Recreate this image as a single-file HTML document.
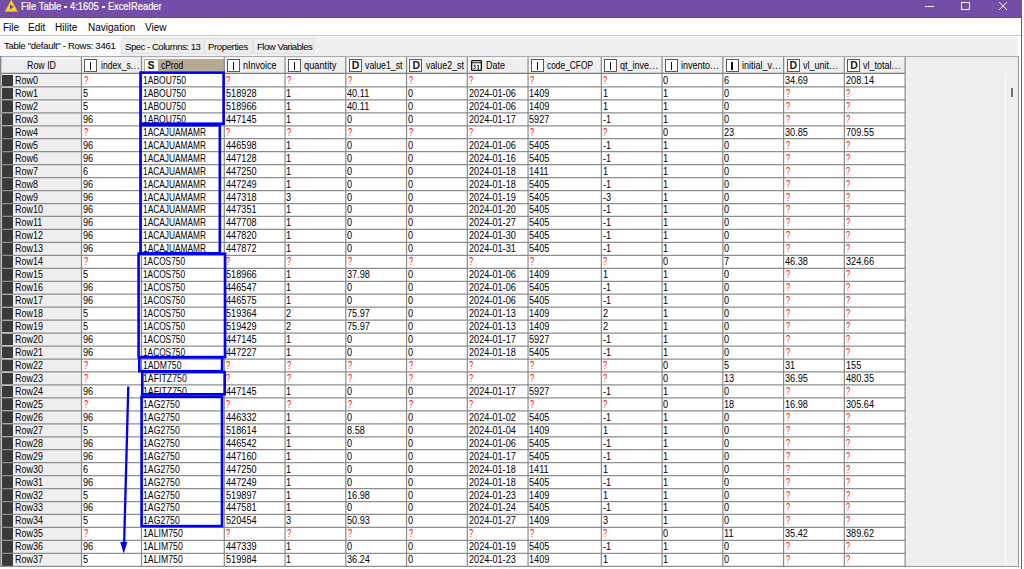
<!DOCTYPE html><html><head><meta charset="utf-8"><style>
*{margin:0;padding:0;box-sizing:border-box}
html,body{width:1024px;height:569px;overflow:hidden;background:#fff;font-family:"Liberation Sans",sans-serif;position:relative}
.a{position:absolute}
.t{position:absolute;white-space:nowrap;line-height:1}
.menu{font-size:10px;color:#000;top:23px}
.tab{font-size:9.5px;letter-spacing:-0.25px;color:#000}
.c{position:absolute;font-size:9.8px;color:#000;white-space:nowrap;line-height:1;transform-origin:0 0}
.q{color:#f00}
.ib{position:absolute;top:59px;width:13px;height:13px;border:1px solid #5a5a5a;background:#fff}
.ht{position:absolute;top:61px;font-size:9.5px;white-space:nowrap;line-height:1;color:#000;transform-origin:0 0}
</style></head><body>

<div class="a" style="left:0;top:0;width:1022px;height:18px;background:#744DA9"></div>
<div class="a" style="left:0;top:17px;width:1022px;height:1px;background:#6a44a0"></div>
<div class="a" style="left:1021px;top:0;width:1px;height:569px;background:#744DA9"></div>
<svg class="a" style="left:4px;top:0" width="15" height="13" viewBox="0 0 15 13"><polygon points="7.3,0 13.6,11.6 1,11.6" fill="#F7D900"/><polygon points="7.3,0 13.6,11.6 1,11.6" fill="none" stroke="#E9A800" stroke-width="0.5"/><polygon points="6,4.6 9.6,7 6,9.4" fill="#4F45C8"/></svg>
<div class="t" style="left:21.4px;top:2px;font-size:10px;color:#fff;-webkit-text-stroke:0.2px #fff;transform:scaleX(0.944);transform-origin:0 0">File Table</div>
<div class="t" style="left:107.6px;top:2px;font-size:10px;color:#fff;-webkit-text-stroke:0.2px #fff;transform:scaleX(0.918);transform-origin:0 0">Excel</div>
<div class="t" style="left:131.3px;top:2px;font-size:10px;color:#fff;-webkit-text-stroke:0.2px #fff;transform:scaleX(0.935);transform-origin:0 0">Reader</div>
<div class="t" style="left:70px;top:2px;font-size:10px;color:#fff;-webkit-text-stroke:0.2px #fff;transform:scaleX(0.937);transform-origin:0 0">4:1605</div>
<div class="a" style="left:63.8px;top:6.3px;width:3px;height:1.3px;background:#fff"></div>
<div class="a" style="left:101.9px;top:6.3px;width:2.8px;height:1.3px;background:#fff"></div>
<div class="a" style="left:925px;top:6px;width:9px;height:1px;background:#fff"></div>
<div class="a" style="left:961px;top:2px;width:9px;height:8px;border:1px solid #fff"></div>
<svg class="a" style="left:998px;top:1px" width="10" height="10" viewBox="0 0 10 10"><path d="M1 1L9 9M9 1L1 9" stroke="#fff" stroke-width="1"/></svg>
<div class="t menu" style="left:3px">File</div>
<div class="t menu" style="left:28px">Edit</div>
<div class="t menu" style="left:55px">Hilite</div>
<div class="t menu" style="left:88px">Navigation</div>
<div class="t menu" style="left:145px">View</div>
<div class="a" style="left:0;top:35px;width:1021px;height:1px;background:#C8C8C8"></div>
<div class="a" style="left:0;top:36px;width:1018px;height:21px;background:#F0F0F0"></div>
<div class="a" style="left:0;top:36px;width:1018px;height:1px;background:#FAFAFA"></div>
<div class="a" style="left:0;top:37px;width:121px;height:19px;background:#F9F9F9"></div>
<div class="a" style="left:121px;top:38px;width:83px;height:16px;background:#EEEEEE;border:1px solid #E2E2E2"></div>
<div class="a" style="left:204px;top:38px;width:49px;height:16px;background:#EEEEEE;border:1px solid #E2E2E2"></div>
<div class="a" style="left:253px;top:38px;width:61px;height:16px;background:#EEEEEE;border:1px solid #E2E2E2"></div>
<div class="t tab" style="left:4px;top:41px;letter-spacing:-0.28px">Table "default" - Rows: 3461</div>
<div class="t tab" style="left:125px;top:42px;letter-spacing:-0.45px">Spec - Columns: 13</div>
<div class="t tab" style="left:208px;top:42px;letter-spacing:-0.35px">Properties</div>
<div class="t tab" style="left:257px;top:42px;letter-spacing:-0.45px">Flow Variables</div>
<div class="a" style="left:0;top:56px;width:1019px;height:511px;background:#EFEFEF;border:1px solid #9a9a9a;border-top-color:#A9ADB2"></div>
<div class="a" style="left:1005px;top:74px;width:1px;height:492px;background:#fbfbfb"></div>
<div class="a" style="left:1011px;top:88px;width:2px;height:9px;background:#707070"></div>
<div class="a" style="left:1px;top:57px;width:905.1px;height:17px;background:#EEEEEE"></div>
<div class="a" style="left:1px;top:57.5px;width:905.1px;height:1px;background:#fafafa"></div>
<div class="ht" style="left:27px;top:61.3px;transform:scale(0.93,1.06)">Row ID</div>
<div class="a" style="left:82.5px;top:57px;width:1px;height:16px;background:#fbfbfb"></div>
<div class="ib" style="left:84.4px"></div>
<div class="a" style="left:90.10px;top:61.5px;width:1.3px;height:8px;background:#111"></div>
<div class="ht" style="left:100.5px;transform:scale(0.909,1.06)">index_s<span style="letter-spacing:0.75px">...</span></div>
<div class="a" style="left:144.0px;top:59px;width:79.80000000000001px;height:12px;background:#B6AB92"></div>
<div class="a" style="left:145.0px;top:59.5px;width:13px;height:11px;background:#fff"></div>
<div class="t" style="left:147.8px;top:60.6px;font-size:10px;font-weight:bold;color:#1a1a1a;-webkit-text-stroke:0.2px #1a1a1a">S</div>
<div class="ht" style="left:160.5px;transform:scale(0.890,1.06)">cProd</div>
<div class="a" style="left:225.3px;top:57px;width:1px;height:16px;background:#fbfbfb"></div>
<div class="ib" style="left:227.20000000000002px"></div>
<div class="a" style="left:232.90px;top:61.5px;width:1.3px;height:8px;background:#111"></div>
<div class="ht" style="left:243.3px;transform:scale(0.947,1.06)">nInvoice</div>
<div class="a" style="left:286.05px;top:57px;width:1px;height:16px;background:#fbfbfb"></div>
<div class="ib" style="left:287.95px"></div>
<div class="a" style="left:293.65px;top:61.5px;width:1.3px;height:8px;background:#111"></div>
<div class="ht" style="left:304.05px;transform:scale(0.975,1.06)">quantity</div>
<div class="a" style="left:346.8px;top:57px;width:1px;height:16px;background:#fbfbfb"></div>
<div class="ib" style="left:348.7px"></div>
<div class="t" style="left:351.7px;top:60.3px;font-size:10.5px;font-weight:bold;color:#1a1a1a;-webkit-text-stroke:0.05px #1a1a1a">D</div>
<div class="ht" style="left:364.8px;transform:scale(0.923,1.06)">value1_st</div>
<div class="a" style="left:407.55px;top:57px;width:1px;height:16px;background:#fbfbfb"></div>
<div class="ib" style="left:409.45px"></div>
<div class="t" style="left:412.45px;top:60.3px;font-size:10.5px;font-weight:bold;color:#1a1a1a;-webkit-text-stroke:0.05px #1a1a1a">D</div>
<div class="ht" style="left:425.55px;transform:scale(0.933,1.06)">value2_st</div>
<div class="a" style="left:468.3px;top:57px;width:1px;height:16px;background:#fbfbfb"></div>
<svg class="a" style="left:471.0px;top:60px" width="12" height="11" viewBox="0 0 12 11"><rect x="0.65" y="0.6" width="9.7" height="9.8" rx="0.8" fill="#fff" stroke="#111" stroke-width="1.3"/><line x1="0.65" y1="2.75" x2="10.35" y2="2.75" stroke="#111" stroke-width="1.0"/><path d="M2.6 5.2h1.6l-0.9 1.2q1.1 0 1.1 1.1t-1.1 1.2h-0.8M6.2 5.6l1.1-0.5v4.1M6.4 9.2h1.6" fill="none" stroke="#111" stroke-width="0.95"/></svg>
<div class="ht" style="left:486.3px;transform:scale(0.947,1.06)">Date</div>
<div class="a" style="left:529.05px;top:57px;width:1px;height:16px;background:#fbfbfb"></div>
<div class="ib" style="left:530.9499999999999px"></div>
<div class="a" style="left:536.65px;top:61.5px;width:1.3px;height:8px;background:#111"></div>
<div class="ht" style="left:547.05px;transform:scale(0.881,1.06)">code_CFOP</div>
<div class="a" style="left:602.35px;top:57px;width:1px;height:16px;background:#fbfbfb"></div>
<div class="ib" style="left:604.25px"></div>
<div class="a" style="left:609.95px;top:61.5px;width:1.3px;height:8px;background:#111"></div>
<div class="ht" style="left:620.35px;transform:scale(0.947,1.06)">qt_inve<span style="letter-spacing:0.75px">...</span></div>
<div class="a" style="left:663.1px;top:57px;width:1px;height:16px;background:#fbfbfb"></div>
<div class="ib" style="left:665.0px"></div>
<div class="a" style="left:670.70px;top:61.5px;width:1.3px;height:8px;background:#111"></div>
<div class="ht" style="left:681.1px;transform:scale(0.947,1.06)">invento<span style="letter-spacing:0.75px">...</span></div>
<div class="a" style="left:723.85px;top:57px;width:1px;height:16px;background:#fbfbfb"></div>
<div class="ib" style="left:725.75px"></div>
<div class="a" style="left:731.45px;top:61.5px;width:1.3px;height:8px;background:#111"></div>
<div class="ht" style="left:741.85px;transform:scale(0.947,1.06)">initial_v<span style="letter-spacing:0.75px">...</span></div>
<div class="a" style="left:784.6px;top:57px;width:1px;height:16px;background:#fbfbfb"></div>
<div class="ib" style="left:786.5px"></div>
<div class="t" style="left:789.5px;top:60.3px;font-size:10.5px;font-weight:bold;color:#1a1a1a;-webkit-text-stroke:0.05px #1a1a1a">D</div>
<div class="ht" style="left:802.6px;transform:scale(0.947,1.06)">vl_unit<span style="letter-spacing:0.75px">...</span></div>
<div class="a" style="left:845.35px;top:57px;width:1px;height:16px;background:#fbfbfb"></div>
<div class="ib" style="left:847.25px"></div>
<div class="t" style="left:850.25px;top:60.3px;font-size:10.5px;font-weight:bold;color:#1a1a1a;-webkit-text-stroke:0.05px #1a1a1a">D</div>
<div class="ht" style="left:863.35px;transform:scale(0.947,1.06)">vl_total<span style="letter-spacing:0.75px">...</span></div>
<div class="a" style="left:81.5px;top:73.95px;width:823.6px;height:492.36600000000004px;background:#fff"></div>
<div class="a" style="left:1.5px;top:73.95px;width:80px;height:492.36600000000004px;background:#EFEFEF"></div>
<div class="a" style="left:2px;top:74.55px;width:10.8px;height:11.76px;background:#3a3a3a"></div>
<div class="c" style="left:14.9px;top:74.90px;transform:scale(0.915,1.08)">Row0</div>
<div class="c q" style="left:83.60px;top:74.90px;transform:scale(0.75,1.08);">?</div>
<div class="c" style="left:143.30px;top:74.90px;transform:scale(0.869,1.08);">1ABOU750</div>
<div class="c q" style="left:226.40px;top:74.90px;transform:scale(0.75,1.08);">?</div>
<div class="c q" style="left:287.15px;top:74.90px;transform:scale(0.75,1.08);">?</div>
<div class="c q" style="left:347.90px;top:74.90px;transform:scale(0.75,1.08);">?</div>
<div class="c q" style="left:408.65px;top:74.90px;transform:scale(0.75,1.08);">?</div>
<div class="c q" style="left:469.40px;top:74.90px;transform:scale(0.75,1.08);">?</div>
<div class="c q" style="left:530.15px;top:74.90px;transform:scale(0.75,1.08);">?</div>
<div class="c q" style="left:603.45px;top:74.90px;transform:scale(0.75,1.08);">?</div>
<div class="c" style="left:663.30px;top:74.90px;transform:scale(0.935,1.08);">0</div>
<div class="c" style="left:724.05px;top:74.90px;transform:scale(0.935,1.08);">6</div>
<div class="c" style="left:784.80px;top:74.90px;transform:scale(0.935,1.08);">34.69</div>
<div class="c" style="left:845.55px;top:74.90px;transform:scale(0.935,1.08);">208.14</div>
<div class="a" style="left:2px;top:87.51px;width:10.8px;height:11.76px;background:#3a3a3a"></div>
<div class="c" style="left:14.9px;top:87.86px;transform:scale(0.915,1.08)">Row1</div>
<div class="c" style="left:82.70px;top:87.86px;transform:scale(0.935,1.08);">5</div>
<div class="c" style="left:143.30px;top:87.86px;transform:scale(0.869,1.08);">1ABOU750</div>
<div class="c" style="left:225.50px;top:87.86px;transform:scale(0.935,1.08);">518928</div>
<div class="c" style="left:286.25px;top:87.86px;transform:scale(0.935,1.08);">1</div>
<div class="c" style="left:347.00px;top:87.86px;transform:scale(0.935,1.08);">40.11</div>
<div class="c" style="left:407.75px;top:87.86px;transform:scale(0.935,1.08);">0</div>
<div class="c" style="left:468.50px;top:87.86px;transform:scale(0.935,1.08);">2024-01-06</div>
<div class="c" style="left:529.25px;top:87.86px;transform:scale(0.935,1.08);">1409</div>
<div class="c" style="left:602.55px;top:87.86px;transform:scale(0.935,1.08);">1</div>
<div class="c" style="left:663.30px;top:87.86px;transform:scale(0.935,1.08);">1</div>
<div class="c" style="left:724.05px;top:87.86px;transform:scale(0.935,1.08);">0</div>
<div class="c q" style="left:785.70px;top:87.86px;transform:scale(0.75,1.08);">?</div>
<div class="c q" style="left:846.45px;top:87.86px;transform:scale(0.75,1.08);">?</div>
<div class="a" style="left:2px;top:100.46px;width:10.8px;height:11.76px;background:#3a3a3a"></div>
<div class="c" style="left:14.9px;top:100.81px;transform:scale(0.915,1.08)">Row2</div>
<div class="c" style="left:82.70px;top:100.81px;transform:scale(0.935,1.08);">5</div>
<div class="c" style="left:143.30px;top:100.81px;transform:scale(0.869,1.08);">1ABOU750</div>
<div class="c" style="left:225.50px;top:100.81px;transform:scale(0.935,1.08);">518966</div>
<div class="c" style="left:286.25px;top:100.81px;transform:scale(0.935,1.08);">1</div>
<div class="c" style="left:347.00px;top:100.81px;transform:scale(0.935,1.08);">40.11</div>
<div class="c" style="left:407.75px;top:100.81px;transform:scale(0.935,1.08);">0</div>
<div class="c" style="left:468.50px;top:100.81px;transform:scale(0.935,1.08);">2024-01-06</div>
<div class="c" style="left:529.25px;top:100.81px;transform:scale(0.935,1.08);">1409</div>
<div class="c" style="left:602.55px;top:100.81px;transform:scale(0.935,1.08);">1</div>
<div class="c" style="left:663.30px;top:100.81px;transform:scale(0.935,1.08);">1</div>
<div class="c" style="left:724.05px;top:100.81px;transform:scale(0.935,1.08);">0</div>
<div class="c q" style="left:785.70px;top:100.81px;transform:scale(0.75,1.08);">?</div>
<div class="c q" style="left:846.45px;top:100.81px;transform:scale(0.75,1.08);">?</div>
<div class="a" style="left:2px;top:113.42px;width:10.8px;height:11.76px;background:#3a3a3a"></div>
<div class="c" style="left:14.9px;top:113.77px;transform:scale(0.915,1.08)">Row3</div>
<div class="c" style="left:82.70px;top:113.77px;transform:scale(0.935,1.08);">96</div>
<div class="c" style="left:143.30px;top:113.77px;transform:scale(0.869,1.08);">1ABOU750</div>
<div class="c" style="left:225.50px;top:113.77px;transform:scale(0.935,1.08);">447145</div>
<div class="c" style="left:286.25px;top:113.77px;transform:scale(0.935,1.08);">1</div>
<div class="c" style="left:347.00px;top:113.77px;transform:scale(0.935,1.08);">0</div>
<div class="c" style="left:407.75px;top:113.77px;transform:scale(0.935,1.08);">0</div>
<div class="c" style="left:468.50px;top:113.77px;transform:scale(0.935,1.08);">2024-01-17</div>
<div class="c" style="left:529.25px;top:113.77px;transform:scale(0.935,1.08);">5927</div>
<div class="c" style="left:602.55px;top:113.77px;transform:scale(0.935,1.08);">-1</div>
<div class="c" style="left:663.30px;top:113.77px;transform:scale(0.935,1.08);">1</div>
<div class="c" style="left:724.05px;top:113.77px;transform:scale(0.935,1.08);">0</div>
<div class="c q" style="left:785.70px;top:113.77px;transform:scale(0.75,1.08);">?</div>
<div class="c q" style="left:846.45px;top:113.77px;transform:scale(0.75,1.08);">?</div>
<div class="a" style="left:2px;top:126.38px;width:10.8px;height:11.76px;background:#3a3a3a"></div>
<div class="c" style="left:14.9px;top:126.73px;transform:scale(0.915,1.08)">Row4</div>
<div class="c q" style="left:83.60px;top:126.73px;transform:scale(0.75,1.08);">?</div>
<div class="c" style="left:143.30px;top:126.73px;transform:scale(0.852,1.08);">1ACAJUAMAMR</div>
<div class="c q" style="left:226.40px;top:126.73px;transform:scale(0.75,1.08);">?</div>
<div class="c q" style="left:287.15px;top:126.73px;transform:scale(0.75,1.08);">?</div>
<div class="c q" style="left:347.90px;top:126.73px;transform:scale(0.75,1.08);">?</div>
<div class="c q" style="left:408.65px;top:126.73px;transform:scale(0.75,1.08);">?</div>
<div class="c q" style="left:469.40px;top:126.73px;transform:scale(0.75,1.08);">?</div>
<div class="c q" style="left:530.15px;top:126.73px;transform:scale(0.75,1.08);">?</div>
<div class="c q" style="left:603.45px;top:126.73px;transform:scale(0.75,1.08);">?</div>
<div class="c" style="left:663.30px;top:126.73px;transform:scale(0.935,1.08);">0</div>
<div class="c" style="left:724.05px;top:126.73px;transform:scale(0.935,1.08);">23</div>
<div class="c" style="left:784.80px;top:126.73px;transform:scale(0.935,1.08);">30.85</div>
<div class="c" style="left:845.55px;top:126.73px;transform:scale(0.935,1.08);">709.55</div>
<div class="a" style="left:2px;top:139.34px;width:10.8px;height:11.76px;background:#3a3a3a"></div>
<div class="c" style="left:14.9px;top:139.69px;transform:scale(0.915,1.08)">Row5</div>
<div class="c" style="left:82.70px;top:139.69px;transform:scale(0.935,1.08);">96</div>
<div class="c" style="left:143.30px;top:139.69px;transform:scale(0.852,1.08);">1ACAJUAMAMR</div>
<div class="c" style="left:225.50px;top:139.69px;transform:scale(0.935,1.08);">446598</div>
<div class="c" style="left:286.25px;top:139.69px;transform:scale(0.935,1.08);">1</div>
<div class="c" style="left:347.00px;top:139.69px;transform:scale(0.935,1.08);">0</div>
<div class="c" style="left:407.75px;top:139.69px;transform:scale(0.935,1.08);">0</div>
<div class="c" style="left:468.50px;top:139.69px;transform:scale(0.935,1.08);">2024-01-06</div>
<div class="c" style="left:529.25px;top:139.69px;transform:scale(0.935,1.08);">5405</div>
<div class="c" style="left:602.55px;top:139.69px;transform:scale(0.935,1.08);">-1</div>
<div class="c" style="left:663.30px;top:139.69px;transform:scale(0.935,1.08);">1</div>
<div class="c" style="left:724.05px;top:139.69px;transform:scale(0.935,1.08);">0</div>
<div class="c q" style="left:785.70px;top:139.69px;transform:scale(0.75,1.08);">?</div>
<div class="c q" style="left:846.45px;top:139.69px;transform:scale(0.75,1.08);">?</div>
<div class="a" style="left:2px;top:152.29px;width:10.8px;height:11.76px;background:#3a3a3a"></div>
<div class="c" style="left:14.9px;top:152.64px;transform:scale(0.915,1.08)">Row6</div>
<div class="c" style="left:82.70px;top:152.64px;transform:scale(0.935,1.08);">96</div>
<div class="c" style="left:143.30px;top:152.64px;transform:scale(0.852,1.08);">1ACAJUAMAMR</div>
<div class="c" style="left:225.50px;top:152.64px;transform:scale(0.935,1.08);">447128</div>
<div class="c" style="left:286.25px;top:152.64px;transform:scale(0.935,1.08);">1</div>
<div class="c" style="left:347.00px;top:152.64px;transform:scale(0.935,1.08);">0</div>
<div class="c" style="left:407.75px;top:152.64px;transform:scale(0.935,1.08);">0</div>
<div class="c" style="left:468.50px;top:152.64px;transform:scale(0.935,1.08);">2024-01-16</div>
<div class="c" style="left:529.25px;top:152.64px;transform:scale(0.935,1.08);">5405</div>
<div class="c" style="left:602.55px;top:152.64px;transform:scale(0.935,1.08);">-1</div>
<div class="c" style="left:663.30px;top:152.64px;transform:scale(0.935,1.08);">1</div>
<div class="c" style="left:724.05px;top:152.64px;transform:scale(0.935,1.08);">0</div>
<div class="c q" style="left:785.70px;top:152.64px;transform:scale(0.75,1.08);">?</div>
<div class="c q" style="left:846.45px;top:152.64px;transform:scale(0.75,1.08);">?</div>
<div class="a" style="left:2px;top:165.25px;width:10.8px;height:11.76px;background:#3a3a3a"></div>
<div class="c" style="left:14.9px;top:165.60px;transform:scale(0.915,1.08)">Row7</div>
<div class="c" style="left:82.70px;top:165.60px;transform:scale(0.935,1.08);">6</div>
<div class="c" style="left:143.30px;top:165.60px;transform:scale(0.852,1.08);">1ACAJUAMAMR</div>
<div class="c" style="left:225.50px;top:165.60px;transform:scale(0.935,1.08);">447250</div>
<div class="c" style="left:286.25px;top:165.60px;transform:scale(0.935,1.08);">1</div>
<div class="c" style="left:347.00px;top:165.60px;transform:scale(0.935,1.08);">0</div>
<div class="c" style="left:407.75px;top:165.60px;transform:scale(0.935,1.08);">0</div>
<div class="c" style="left:468.50px;top:165.60px;transform:scale(0.935,1.08);">2024-01-18</div>
<div class="c" style="left:529.25px;top:165.60px;transform:scale(0.935,1.08);">1411</div>
<div class="c" style="left:602.55px;top:165.60px;transform:scale(0.935,1.08);">1</div>
<div class="c" style="left:663.30px;top:165.60px;transform:scale(0.935,1.08);">1</div>
<div class="c" style="left:724.05px;top:165.60px;transform:scale(0.935,1.08);">0</div>
<div class="c q" style="left:785.70px;top:165.60px;transform:scale(0.75,1.08);">?</div>
<div class="c q" style="left:846.45px;top:165.60px;transform:scale(0.75,1.08);">?</div>
<div class="a" style="left:2px;top:178.21px;width:10.8px;height:11.76px;background:#3a3a3a"></div>
<div class="c" style="left:14.9px;top:178.56px;transform:scale(0.915,1.08)">Row8</div>
<div class="c" style="left:82.70px;top:178.56px;transform:scale(0.935,1.08);">96</div>
<div class="c" style="left:143.30px;top:178.56px;transform:scale(0.852,1.08);">1ACAJUAMAMR</div>
<div class="c" style="left:225.50px;top:178.56px;transform:scale(0.935,1.08);">447249</div>
<div class="c" style="left:286.25px;top:178.56px;transform:scale(0.935,1.08);">1</div>
<div class="c" style="left:347.00px;top:178.56px;transform:scale(0.935,1.08);">0</div>
<div class="c" style="left:407.75px;top:178.56px;transform:scale(0.935,1.08);">0</div>
<div class="c" style="left:468.50px;top:178.56px;transform:scale(0.935,1.08);">2024-01-18</div>
<div class="c" style="left:529.25px;top:178.56px;transform:scale(0.935,1.08);">5405</div>
<div class="c" style="left:602.55px;top:178.56px;transform:scale(0.935,1.08);">-1</div>
<div class="c" style="left:663.30px;top:178.56px;transform:scale(0.935,1.08);">1</div>
<div class="c" style="left:724.05px;top:178.56px;transform:scale(0.935,1.08);">0</div>
<div class="c q" style="left:785.70px;top:178.56px;transform:scale(0.75,1.08);">?</div>
<div class="c q" style="left:846.45px;top:178.56px;transform:scale(0.75,1.08);">?</div>
<div class="a" style="left:2px;top:191.16px;width:10.8px;height:11.76px;background:#3a3a3a"></div>
<div class="c" style="left:14.9px;top:191.51px;transform:scale(0.915,1.08)">Row9</div>
<div class="c" style="left:82.70px;top:191.51px;transform:scale(0.935,1.08);">96</div>
<div class="c" style="left:143.30px;top:191.51px;transform:scale(0.852,1.08);">1ACAJUAMAMR</div>
<div class="c" style="left:225.50px;top:191.51px;transform:scale(0.935,1.08);">447318</div>
<div class="c" style="left:286.25px;top:191.51px;transform:scale(0.935,1.08);">3</div>
<div class="c" style="left:347.00px;top:191.51px;transform:scale(0.935,1.08);">0</div>
<div class="c" style="left:407.75px;top:191.51px;transform:scale(0.935,1.08);">0</div>
<div class="c" style="left:468.50px;top:191.51px;transform:scale(0.935,1.08);">2024-01-19</div>
<div class="c" style="left:529.25px;top:191.51px;transform:scale(0.935,1.08);">5405</div>
<div class="c" style="left:602.55px;top:191.51px;transform:scale(0.935,1.08);">-3</div>
<div class="c" style="left:663.30px;top:191.51px;transform:scale(0.935,1.08);">1</div>
<div class="c" style="left:724.05px;top:191.51px;transform:scale(0.935,1.08);">0</div>
<div class="c q" style="left:785.70px;top:191.51px;transform:scale(0.75,1.08);">?</div>
<div class="c q" style="left:846.45px;top:191.51px;transform:scale(0.75,1.08);">?</div>
<div class="a" style="left:2px;top:204.12px;width:10.8px;height:11.76px;background:#3a3a3a"></div>
<div class="c" style="left:14.9px;top:204.47px;transform:scale(0.915,1.08)">Row10</div>
<div class="c" style="left:82.70px;top:204.47px;transform:scale(0.935,1.08);">96</div>
<div class="c" style="left:143.30px;top:204.47px;transform:scale(0.852,1.08);">1ACAJUAMAMR</div>
<div class="c" style="left:225.50px;top:204.47px;transform:scale(0.935,1.08);">447351</div>
<div class="c" style="left:286.25px;top:204.47px;transform:scale(0.935,1.08);">1</div>
<div class="c" style="left:347.00px;top:204.47px;transform:scale(0.935,1.08);">0</div>
<div class="c" style="left:407.75px;top:204.47px;transform:scale(0.935,1.08);">0</div>
<div class="c" style="left:468.50px;top:204.47px;transform:scale(0.935,1.08);">2024-01-20</div>
<div class="c" style="left:529.25px;top:204.47px;transform:scale(0.935,1.08);">5405</div>
<div class="c" style="left:602.55px;top:204.47px;transform:scale(0.935,1.08);">-1</div>
<div class="c" style="left:663.30px;top:204.47px;transform:scale(0.935,1.08);">1</div>
<div class="c" style="left:724.05px;top:204.47px;transform:scale(0.935,1.08);">0</div>
<div class="c q" style="left:785.70px;top:204.47px;transform:scale(0.75,1.08);">?</div>
<div class="c q" style="left:846.45px;top:204.47px;transform:scale(0.75,1.08);">?</div>
<div class="a" style="left:2px;top:217.08px;width:10.8px;height:11.76px;background:#3a3a3a"></div>
<div class="c" style="left:14.9px;top:217.43px;transform:scale(0.915,1.08)">Row11</div>
<div class="c" style="left:82.70px;top:217.43px;transform:scale(0.935,1.08);">96</div>
<div class="c" style="left:143.30px;top:217.43px;transform:scale(0.852,1.08);">1ACAJUAMAMR</div>
<div class="c" style="left:225.50px;top:217.43px;transform:scale(0.935,1.08);">447708</div>
<div class="c" style="left:286.25px;top:217.43px;transform:scale(0.935,1.08);">1</div>
<div class="c" style="left:347.00px;top:217.43px;transform:scale(0.935,1.08);">0</div>
<div class="c" style="left:407.75px;top:217.43px;transform:scale(0.935,1.08);">0</div>
<div class="c" style="left:468.50px;top:217.43px;transform:scale(0.935,1.08);">2024-01-27</div>
<div class="c" style="left:529.25px;top:217.43px;transform:scale(0.935,1.08);">5405</div>
<div class="c" style="left:602.55px;top:217.43px;transform:scale(0.935,1.08);">-1</div>
<div class="c" style="left:663.30px;top:217.43px;transform:scale(0.935,1.08);">1</div>
<div class="c" style="left:724.05px;top:217.43px;transform:scale(0.935,1.08);">0</div>
<div class="c q" style="left:785.70px;top:217.43px;transform:scale(0.75,1.08);">?</div>
<div class="c q" style="left:846.45px;top:217.43px;transform:scale(0.75,1.08);">?</div>
<div class="a" style="left:2px;top:230.03px;width:10.8px;height:11.76px;background:#3a3a3a"></div>
<div class="c" style="left:14.9px;top:230.38px;transform:scale(0.915,1.08)">Row12</div>
<div class="c" style="left:82.70px;top:230.38px;transform:scale(0.935,1.08);">96</div>
<div class="c" style="left:143.30px;top:230.38px;transform:scale(0.852,1.08);">1ACAJUAMAMR</div>
<div class="c" style="left:225.50px;top:230.38px;transform:scale(0.935,1.08);">447820</div>
<div class="c" style="left:286.25px;top:230.38px;transform:scale(0.935,1.08);">1</div>
<div class="c" style="left:347.00px;top:230.38px;transform:scale(0.935,1.08);">0</div>
<div class="c" style="left:407.75px;top:230.38px;transform:scale(0.935,1.08);">0</div>
<div class="c" style="left:468.50px;top:230.38px;transform:scale(0.935,1.08);">2024-01-30</div>
<div class="c" style="left:529.25px;top:230.38px;transform:scale(0.935,1.08);">5405</div>
<div class="c" style="left:602.55px;top:230.38px;transform:scale(0.935,1.08);">-1</div>
<div class="c" style="left:663.30px;top:230.38px;transform:scale(0.935,1.08);">1</div>
<div class="c" style="left:724.05px;top:230.38px;transform:scale(0.935,1.08);">0</div>
<div class="c q" style="left:785.70px;top:230.38px;transform:scale(0.75,1.08);">?</div>
<div class="c q" style="left:846.45px;top:230.38px;transform:scale(0.75,1.08);">?</div>
<div class="a" style="left:2px;top:242.99px;width:10.8px;height:11.76px;background:#3a3a3a"></div>
<div class="c" style="left:14.9px;top:243.34px;transform:scale(0.915,1.08)">Row13</div>
<div class="c" style="left:82.70px;top:243.34px;transform:scale(0.935,1.08);">96</div>
<div class="c" style="left:143.30px;top:243.34px;transform:scale(0.852,1.08);">1ACAJUAMAMR</div>
<div class="c" style="left:225.50px;top:243.34px;transform:scale(0.935,1.08);">447872</div>
<div class="c" style="left:286.25px;top:243.34px;transform:scale(0.935,1.08);">1</div>
<div class="c" style="left:347.00px;top:243.34px;transform:scale(0.935,1.08);">0</div>
<div class="c" style="left:407.75px;top:243.34px;transform:scale(0.935,1.08);">0</div>
<div class="c" style="left:468.50px;top:243.34px;transform:scale(0.935,1.08);">2024-01-31</div>
<div class="c" style="left:529.25px;top:243.34px;transform:scale(0.935,1.08);">5405</div>
<div class="c" style="left:602.55px;top:243.34px;transform:scale(0.935,1.08);">-1</div>
<div class="c" style="left:663.30px;top:243.34px;transform:scale(0.935,1.08);">1</div>
<div class="c" style="left:724.05px;top:243.34px;transform:scale(0.935,1.08);">0</div>
<div class="c q" style="left:785.70px;top:243.34px;transform:scale(0.75,1.08);">?</div>
<div class="c q" style="left:846.45px;top:243.34px;transform:scale(0.75,1.08);">?</div>
<div class="a" style="left:2px;top:255.95px;width:10.8px;height:11.76px;background:#3a3a3a"></div>
<div class="c" style="left:14.9px;top:256.30px;transform:scale(0.915,1.08)">Row14</div>
<div class="c q" style="left:83.60px;top:256.30px;transform:scale(0.75,1.08);">?</div>
<div class="c" style="left:143.30px;top:256.30px;transform:scale(0.848,1.08);">1ACOS750</div>
<div class="c q" style="left:226.40px;top:256.30px;transform:scale(0.75,1.08);">?</div>
<div class="c q" style="left:287.15px;top:256.30px;transform:scale(0.75,1.08);">?</div>
<div class="c q" style="left:347.90px;top:256.30px;transform:scale(0.75,1.08);">?</div>
<div class="c q" style="left:408.65px;top:256.30px;transform:scale(0.75,1.08);">?</div>
<div class="c q" style="left:469.40px;top:256.30px;transform:scale(0.75,1.08);">?</div>
<div class="c q" style="left:530.15px;top:256.30px;transform:scale(0.75,1.08);">?</div>
<div class="c q" style="left:603.45px;top:256.30px;transform:scale(0.75,1.08);">?</div>
<div class="c" style="left:663.30px;top:256.30px;transform:scale(0.935,1.08);">0</div>
<div class="c" style="left:724.05px;top:256.30px;transform:scale(0.935,1.08);">7</div>
<div class="c" style="left:784.80px;top:256.30px;transform:scale(0.935,1.08);">46.38</div>
<div class="c" style="left:845.55px;top:256.30px;transform:scale(0.935,1.08);">324.66</div>
<div class="a" style="left:2px;top:268.91px;width:10.8px;height:11.76px;background:#3a3a3a"></div>
<div class="c" style="left:14.9px;top:269.25px;transform:scale(0.915,1.08)">Row15</div>
<div class="c" style="left:82.70px;top:269.25px;transform:scale(0.935,1.08);">5</div>
<div class="c" style="left:143.30px;top:269.25px;transform:scale(0.848,1.08);">1ACOS750</div>
<div class="c" style="left:225.50px;top:269.25px;transform:scale(0.935,1.08);">518966</div>
<div class="c" style="left:286.25px;top:269.25px;transform:scale(0.935,1.08);">1</div>
<div class="c" style="left:347.00px;top:269.25px;transform:scale(0.935,1.08);">37.98</div>
<div class="c" style="left:407.75px;top:269.25px;transform:scale(0.935,1.08);">0</div>
<div class="c" style="left:468.50px;top:269.25px;transform:scale(0.935,1.08);">2024-01-06</div>
<div class="c" style="left:529.25px;top:269.25px;transform:scale(0.935,1.08);">1409</div>
<div class="c" style="left:602.55px;top:269.25px;transform:scale(0.935,1.08);">1</div>
<div class="c" style="left:663.30px;top:269.25px;transform:scale(0.935,1.08);">1</div>
<div class="c" style="left:724.05px;top:269.25px;transform:scale(0.935,1.08);">0</div>
<div class="c q" style="left:785.70px;top:269.25px;transform:scale(0.75,1.08);">?</div>
<div class="c q" style="left:846.45px;top:269.25px;transform:scale(0.75,1.08);">?</div>
<div class="a" style="left:2px;top:281.86px;width:10.8px;height:11.76px;background:#3a3a3a"></div>
<div class="c" style="left:14.9px;top:282.21px;transform:scale(0.915,1.08)">Row16</div>
<div class="c" style="left:82.70px;top:282.21px;transform:scale(0.935,1.08);">96</div>
<div class="c" style="left:143.30px;top:282.21px;transform:scale(0.848,1.08);">1ACOS750</div>
<div class="c" style="left:225.50px;top:282.21px;transform:scale(0.935,1.08);">446547</div>
<div class="c" style="left:286.25px;top:282.21px;transform:scale(0.935,1.08);">1</div>
<div class="c" style="left:347.00px;top:282.21px;transform:scale(0.935,1.08);">0</div>
<div class="c" style="left:407.75px;top:282.21px;transform:scale(0.935,1.08);">0</div>
<div class="c" style="left:468.50px;top:282.21px;transform:scale(0.935,1.08);">2024-01-06</div>
<div class="c" style="left:529.25px;top:282.21px;transform:scale(0.935,1.08);">5405</div>
<div class="c" style="left:602.55px;top:282.21px;transform:scale(0.935,1.08);">-1</div>
<div class="c" style="left:663.30px;top:282.21px;transform:scale(0.935,1.08);">1</div>
<div class="c" style="left:724.05px;top:282.21px;transform:scale(0.935,1.08);">0</div>
<div class="c q" style="left:785.70px;top:282.21px;transform:scale(0.75,1.08);">?</div>
<div class="c q" style="left:846.45px;top:282.21px;transform:scale(0.75,1.08);">?</div>
<div class="a" style="left:2px;top:294.82px;width:10.8px;height:11.76px;background:#3a3a3a"></div>
<div class="c" style="left:14.9px;top:295.17px;transform:scale(0.915,1.08)">Row17</div>
<div class="c" style="left:82.70px;top:295.17px;transform:scale(0.935,1.08);">96</div>
<div class="c" style="left:143.30px;top:295.17px;transform:scale(0.848,1.08);">1ACOS750</div>
<div class="c" style="left:225.50px;top:295.17px;transform:scale(0.935,1.08);">446575</div>
<div class="c" style="left:286.25px;top:295.17px;transform:scale(0.935,1.08);">1</div>
<div class="c" style="left:347.00px;top:295.17px;transform:scale(0.935,1.08);">0</div>
<div class="c" style="left:407.75px;top:295.17px;transform:scale(0.935,1.08);">0</div>
<div class="c" style="left:468.50px;top:295.17px;transform:scale(0.935,1.08);">2024-01-06</div>
<div class="c" style="left:529.25px;top:295.17px;transform:scale(0.935,1.08);">5405</div>
<div class="c" style="left:602.55px;top:295.17px;transform:scale(0.935,1.08);">-1</div>
<div class="c" style="left:663.30px;top:295.17px;transform:scale(0.935,1.08);">1</div>
<div class="c" style="left:724.05px;top:295.17px;transform:scale(0.935,1.08);">0</div>
<div class="c q" style="left:785.70px;top:295.17px;transform:scale(0.75,1.08);">?</div>
<div class="c q" style="left:846.45px;top:295.17px;transform:scale(0.75,1.08);">?</div>
<div class="a" style="left:2px;top:307.78px;width:10.8px;height:11.76px;background:#3a3a3a"></div>
<div class="c" style="left:14.9px;top:308.13px;transform:scale(0.915,1.08)">Row18</div>
<div class="c" style="left:82.70px;top:308.13px;transform:scale(0.935,1.08);">5</div>
<div class="c" style="left:143.30px;top:308.13px;transform:scale(0.848,1.08);">1ACOS750</div>
<div class="c" style="left:225.50px;top:308.13px;transform:scale(0.935,1.08);">519364</div>
<div class="c" style="left:286.25px;top:308.13px;transform:scale(0.935,1.08);">2</div>
<div class="c" style="left:347.00px;top:308.13px;transform:scale(0.935,1.08);">75.97</div>
<div class="c" style="left:407.75px;top:308.13px;transform:scale(0.935,1.08);">0</div>
<div class="c" style="left:468.50px;top:308.13px;transform:scale(0.935,1.08);">2024-01-13</div>
<div class="c" style="left:529.25px;top:308.13px;transform:scale(0.935,1.08);">1409</div>
<div class="c" style="left:602.55px;top:308.13px;transform:scale(0.935,1.08);">2</div>
<div class="c" style="left:663.30px;top:308.13px;transform:scale(0.935,1.08);">1</div>
<div class="c" style="left:724.05px;top:308.13px;transform:scale(0.935,1.08);">0</div>
<div class="c q" style="left:785.70px;top:308.13px;transform:scale(0.75,1.08);">?</div>
<div class="c q" style="left:846.45px;top:308.13px;transform:scale(0.75,1.08);">?</div>
<div class="a" style="left:2px;top:320.73px;width:10.8px;height:11.76px;background:#3a3a3a"></div>
<div class="c" style="left:14.9px;top:321.08px;transform:scale(0.915,1.08)">Row19</div>
<div class="c" style="left:82.70px;top:321.08px;transform:scale(0.935,1.08);">5</div>
<div class="c" style="left:143.30px;top:321.08px;transform:scale(0.848,1.08);">1ACOS750</div>
<div class="c" style="left:225.50px;top:321.08px;transform:scale(0.935,1.08);">519429</div>
<div class="c" style="left:286.25px;top:321.08px;transform:scale(0.935,1.08);">2</div>
<div class="c" style="left:347.00px;top:321.08px;transform:scale(0.935,1.08);">75.97</div>
<div class="c" style="left:407.75px;top:321.08px;transform:scale(0.935,1.08);">0</div>
<div class="c" style="left:468.50px;top:321.08px;transform:scale(0.935,1.08);">2024-01-13</div>
<div class="c" style="left:529.25px;top:321.08px;transform:scale(0.935,1.08);">1409</div>
<div class="c" style="left:602.55px;top:321.08px;transform:scale(0.935,1.08);">2</div>
<div class="c" style="left:663.30px;top:321.08px;transform:scale(0.935,1.08);">1</div>
<div class="c" style="left:724.05px;top:321.08px;transform:scale(0.935,1.08);">0</div>
<div class="c q" style="left:785.70px;top:321.08px;transform:scale(0.75,1.08);">?</div>
<div class="c q" style="left:846.45px;top:321.08px;transform:scale(0.75,1.08);">?</div>
<div class="a" style="left:2px;top:333.69px;width:10.8px;height:11.76px;background:#3a3a3a"></div>
<div class="c" style="left:14.9px;top:334.04px;transform:scale(0.915,1.08)">Row20</div>
<div class="c" style="left:82.70px;top:334.04px;transform:scale(0.935,1.08);">96</div>
<div class="c" style="left:143.30px;top:334.04px;transform:scale(0.848,1.08);">1ACOS750</div>
<div class="c" style="left:225.50px;top:334.04px;transform:scale(0.935,1.08);">447145</div>
<div class="c" style="left:286.25px;top:334.04px;transform:scale(0.935,1.08);">1</div>
<div class="c" style="left:347.00px;top:334.04px;transform:scale(0.935,1.08);">0</div>
<div class="c" style="left:407.75px;top:334.04px;transform:scale(0.935,1.08);">0</div>
<div class="c" style="left:468.50px;top:334.04px;transform:scale(0.935,1.08);">2024-01-17</div>
<div class="c" style="left:529.25px;top:334.04px;transform:scale(0.935,1.08);">5927</div>
<div class="c" style="left:602.55px;top:334.04px;transform:scale(0.935,1.08);">-1</div>
<div class="c" style="left:663.30px;top:334.04px;transform:scale(0.935,1.08);">1</div>
<div class="c" style="left:724.05px;top:334.04px;transform:scale(0.935,1.08);">0</div>
<div class="c q" style="left:785.70px;top:334.04px;transform:scale(0.75,1.08);">?</div>
<div class="c q" style="left:846.45px;top:334.04px;transform:scale(0.75,1.08);">?</div>
<div class="a" style="left:2px;top:346.65px;width:10.8px;height:11.76px;background:#3a3a3a"></div>
<div class="c" style="left:14.9px;top:347.00px;transform:scale(0.915,1.08)">Row21</div>
<div class="c" style="left:82.70px;top:347.00px;transform:scale(0.935,1.08);">96</div>
<div class="c" style="left:143.30px;top:347.00px;transform:scale(0.848,1.08);">1ACOS750</div>
<div class="c" style="left:225.50px;top:347.00px;transform:scale(0.935,1.08);">447227</div>
<div class="c" style="left:286.25px;top:347.00px;transform:scale(0.935,1.08);">1</div>
<div class="c" style="left:347.00px;top:347.00px;transform:scale(0.935,1.08);">0</div>
<div class="c" style="left:407.75px;top:347.00px;transform:scale(0.935,1.08);">0</div>
<div class="c" style="left:468.50px;top:347.00px;transform:scale(0.935,1.08);">2024-01-18</div>
<div class="c" style="left:529.25px;top:347.00px;transform:scale(0.935,1.08);">5405</div>
<div class="c" style="left:602.55px;top:347.00px;transform:scale(0.935,1.08);">-1</div>
<div class="c" style="left:663.30px;top:347.00px;transform:scale(0.935,1.08);">1</div>
<div class="c" style="left:724.05px;top:347.00px;transform:scale(0.935,1.08);">0</div>
<div class="c q" style="left:785.70px;top:347.00px;transform:scale(0.75,1.08);">?</div>
<div class="c q" style="left:846.45px;top:347.00px;transform:scale(0.75,1.08);">?</div>
<div class="a" style="left:2px;top:359.60px;width:10.8px;height:11.76px;background:#3a3a3a"></div>
<div class="c" style="left:14.9px;top:359.95px;transform:scale(0.915,1.08)">Row22</div>
<div class="c q" style="left:83.60px;top:359.95px;transform:scale(0.75,1.08);">?</div>
<div class="c" style="left:143.30px;top:359.95px;transform:scale(0.883,1.08);">1ADM750</div>
<div class="c q" style="left:226.40px;top:359.95px;transform:scale(0.75,1.08);">?</div>
<div class="c q" style="left:287.15px;top:359.95px;transform:scale(0.75,1.08);">?</div>
<div class="c q" style="left:347.90px;top:359.95px;transform:scale(0.75,1.08);">?</div>
<div class="c q" style="left:408.65px;top:359.95px;transform:scale(0.75,1.08);">?</div>
<div class="c q" style="left:469.40px;top:359.95px;transform:scale(0.75,1.08);">?</div>
<div class="c q" style="left:530.15px;top:359.95px;transform:scale(0.75,1.08);">?</div>
<div class="c q" style="left:603.45px;top:359.95px;transform:scale(0.75,1.08);">?</div>
<div class="c" style="left:663.30px;top:359.95px;transform:scale(0.935,1.08);">0</div>
<div class="c" style="left:724.05px;top:359.95px;transform:scale(0.935,1.08);">5</div>
<div class="c" style="left:784.80px;top:359.95px;transform:scale(0.935,1.08);">31</div>
<div class="c" style="left:845.55px;top:359.95px;transform:scale(0.935,1.08);">155</div>
<div class="a" style="left:2px;top:372.56px;width:10.8px;height:11.76px;background:#3a3a3a"></div>
<div class="c" style="left:14.9px;top:372.91px;transform:scale(0.915,1.08)">Row23</div>
<div class="c q" style="left:83.60px;top:372.91px;transform:scale(0.75,1.08);">?</div>
<div class="c" style="left:143.30px;top:372.91px;transform:scale(0.894,1.08);">1AFITZ750</div>
<div class="c q" style="left:226.40px;top:372.91px;transform:scale(0.75,1.08);">?</div>
<div class="c q" style="left:287.15px;top:372.91px;transform:scale(0.75,1.08);">?</div>
<div class="c q" style="left:347.90px;top:372.91px;transform:scale(0.75,1.08);">?</div>
<div class="c q" style="left:408.65px;top:372.91px;transform:scale(0.75,1.08);">?</div>
<div class="c q" style="left:469.40px;top:372.91px;transform:scale(0.75,1.08);">?</div>
<div class="c q" style="left:530.15px;top:372.91px;transform:scale(0.75,1.08);">?</div>
<div class="c q" style="left:603.45px;top:372.91px;transform:scale(0.75,1.08);">?</div>
<div class="c" style="left:663.30px;top:372.91px;transform:scale(0.935,1.08);">0</div>
<div class="c" style="left:724.05px;top:372.91px;transform:scale(0.935,1.08);">13</div>
<div class="c" style="left:784.80px;top:372.91px;transform:scale(0.935,1.08);">36.95</div>
<div class="c" style="left:845.55px;top:372.91px;transform:scale(0.935,1.08);">480.35</div>
<div class="a" style="left:2px;top:385.52px;width:10.8px;height:11.76px;background:#3a3a3a"></div>
<div class="c" style="left:14.9px;top:385.87px;transform:scale(0.915,1.08)">Row24</div>
<div class="c" style="left:82.70px;top:385.87px;transform:scale(0.935,1.08);">96</div>
<div class="c" style="left:143.30px;top:385.87px;transform:scale(0.894,1.08);">1AFITZ750</div>
<div class="c" style="left:225.50px;top:385.87px;transform:scale(0.935,1.08);">447145</div>
<div class="c" style="left:286.25px;top:385.87px;transform:scale(0.935,1.08);">1</div>
<div class="c" style="left:347.00px;top:385.87px;transform:scale(0.935,1.08);">0</div>
<div class="c" style="left:407.75px;top:385.87px;transform:scale(0.935,1.08);">0</div>
<div class="c" style="left:468.50px;top:385.87px;transform:scale(0.935,1.08);">2024-01-17</div>
<div class="c" style="left:529.25px;top:385.87px;transform:scale(0.935,1.08);">5927</div>
<div class="c" style="left:602.55px;top:385.87px;transform:scale(0.935,1.08);">-1</div>
<div class="c" style="left:663.30px;top:385.87px;transform:scale(0.935,1.08);">1</div>
<div class="c" style="left:724.05px;top:385.87px;transform:scale(0.935,1.08);">0</div>
<div class="c q" style="left:785.70px;top:385.87px;transform:scale(0.75,1.08);">?</div>
<div class="c q" style="left:846.45px;top:385.87px;transform:scale(0.75,1.08);">?</div>
<div class="a" style="left:2px;top:398.48px;width:10.8px;height:11.76px;background:#3a3a3a"></div>
<div class="c" style="left:14.9px;top:398.82px;transform:scale(0.915,1.08)">Row25</div>
<div class="c q" style="left:83.60px;top:398.82px;transform:scale(0.75,1.08);">?</div>
<div class="c" style="left:143.30px;top:398.82px;transform:scale(0.887,1.08);">1AG2750</div>
<div class="c q" style="left:226.40px;top:398.82px;transform:scale(0.75,1.08);">?</div>
<div class="c q" style="left:287.15px;top:398.82px;transform:scale(0.75,1.08);">?</div>
<div class="c q" style="left:347.90px;top:398.82px;transform:scale(0.75,1.08);">?</div>
<div class="c q" style="left:408.65px;top:398.82px;transform:scale(0.75,1.08);">?</div>
<div class="c q" style="left:469.40px;top:398.82px;transform:scale(0.75,1.08);">?</div>
<div class="c q" style="left:530.15px;top:398.82px;transform:scale(0.75,1.08);">?</div>
<div class="c q" style="left:603.45px;top:398.82px;transform:scale(0.75,1.08);">?</div>
<div class="c" style="left:663.30px;top:398.82px;transform:scale(0.935,1.08);">0</div>
<div class="c" style="left:724.05px;top:398.82px;transform:scale(0.935,1.08);">18</div>
<div class="c" style="left:784.80px;top:398.82px;transform:scale(0.935,1.08);">16.98</div>
<div class="c" style="left:845.55px;top:398.82px;transform:scale(0.935,1.08);">305.64</div>
<div class="a" style="left:2px;top:411.43px;width:10.8px;height:11.76px;background:#3a3a3a"></div>
<div class="c" style="left:14.9px;top:411.78px;transform:scale(0.915,1.08)">Row26</div>
<div class="c" style="left:82.70px;top:411.78px;transform:scale(0.935,1.08);">96</div>
<div class="c" style="left:143.30px;top:411.78px;transform:scale(0.887,1.08);">1AG2750</div>
<div class="c" style="left:225.50px;top:411.78px;transform:scale(0.935,1.08);">446332</div>
<div class="c" style="left:286.25px;top:411.78px;transform:scale(0.935,1.08);">1</div>
<div class="c" style="left:347.00px;top:411.78px;transform:scale(0.935,1.08);">0</div>
<div class="c" style="left:407.75px;top:411.78px;transform:scale(0.935,1.08);">0</div>
<div class="c" style="left:468.50px;top:411.78px;transform:scale(0.935,1.08);">2024-01-02</div>
<div class="c" style="left:529.25px;top:411.78px;transform:scale(0.935,1.08);">5405</div>
<div class="c" style="left:602.55px;top:411.78px;transform:scale(0.935,1.08);">-1</div>
<div class="c" style="left:663.30px;top:411.78px;transform:scale(0.935,1.08);">1</div>
<div class="c" style="left:724.05px;top:411.78px;transform:scale(0.935,1.08);">0</div>
<div class="c q" style="left:785.70px;top:411.78px;transform:scale(0.75,1.08);">?</div>
<div class="c q" style="left:846.45px;top:411.78px;transform:scale(0.75,1.08);">?</div>
<div class="a" style="left:2px;top:424.39px;width:10.8px;height:11.76px;background:#3a3a3a"></div>
<div class="c" style="left:14.9px;top:424.74px;transform:scale(0.915,1.08)">Row27</div>
<div class="c" style="left:82.70px;top:424.74px;transform:scale(0.935,1.08);">5</div>
<div class="c" style="left:143.30px;top:424.74px;transform:scale(0.887,1.08);">1AG2750</div>
<div class="c" style="left:225.50px;top:424.74px;transform:scale(0.935,1.08);">518614</div>
<div class="c" style="left:286.25px;top:424.74px;transform:scale(0.935,1.08);">1</div>
<div class="c" style="left:347.00px;top:424.74px;transform:scale(0.935,1.08);">8.58</div>
<div class="c" style="left:407.75px;top:424.74px;transform:scale(0.935,1.08);">0</div>
<div class="c" style="left:468.50px;top:424.74px;transform:scale(0.935,1.08);">2024-01-04</div>
<div class="c" style="left:529.25px;top:424.74px;transform:scale(0.935,1.08);">1409</div>
<div class="c" style="left:602.55px;top:424.74px;transform:scale(0.935,1.08);">1</div>
<div class="c" style="left:663.30px;top:424.74px;transform:scale(0.935,1.08);">1</div>
<div class="c" style="left:724.05px;top:424.74px;transform:scale(0.935,1.08);">0</div>
<div class="c q" style="left:785.70px;top:424.74px;transform:scale(0.75,1.08);">?</div>
<div class="c q" style="left:846.45px;top:424.74px;transform:scale(0.75,1.08);">?</div>
<div class="a" style="left:2px;top:437.35px;width:10.8px;height:11.76px;background:#3a3a3a"></div>
<div class="c" style="left:14.9px;top:437.70px;transform:scale(0.915,1.08)">Row28</div>
<div class="c" style="left:82.70px;top:437.70px;transform:scale(0.935,1.08);">96</div>
<div class="c" style="left:143.30px;top:437.70px;transform:scale(0.887,1.08);">1AG2750</div>
<div class="c" style="left:225.50px;top:437.70px;transform:scale(0.935,1.08);">446542</div>
<div class="c" style="left:286.25px;top:437.70px;transform:scale(0.935,1.08);">1</div>
<div class="c" style="left:347.00px;top:437.70px;transform:scale(0.935,1.08);">0</div>
<div class="c" style="left:407.75px;top:437.70px;transform:scale(0.935,1.08);">0</div>
<div class="c" style="left:468.50px;top:437.70px;transform:scale(0.935,1.08);">2024-01-06</div>
<div class="c" style="left:529.25px;top:437.70px;transform:scale(0.935,1.08);">5405</div>
<div class="c" style="left:602.55px;top:437.70px;transform:scale(0.935,1.08);">-1</div>
<div class="c" style="left:663.30px;top:437.70px;transform:scale(0.935,1.08);">1</div>
<div class="c" style="left:724.05px;top:437.70px;transform:scale(0.935,1.08);">0</div>
<div class="c q" style="left:785.70px;top:437.70px;transform:scale(0.75,1.08);">?</div>
<div class="c q" style="left:846.45px;top:437.70px;transform:scale(0.75,1.08);">?</div>
<div class="a" style="left:2px;top:450.30px;width:10.8px;height:11.76px;background:#3a3a3a"></div>
<div class="c" style="left:14.9px;top:450.65px;transform:scale(0.915,1.08)">Row29</div>
<div class="c" style="left:82.70px;top:450.65px;transform:scale(0.935,1.08);">96</div>
<div class="c" style="left:143.30px;top:450.65px;transform:scale(0.887,1.08);">1AG2750</div>
<div class="c" style="left:225.50px;top:450.65px;transform:scale(0.935,1.08);">447160</div>
<div class="c" style="left:286.25px;top:450.65px;transform:scale(0.935,1.08);">1</div>
<div class="c" style="left:347.00px;top:450.65px;transform:scale(0.935,1.08);">0</div>
<div class="c" style="left:407.75px;top:450.65px;transform:scale(0.935,1.08);">0</div>
<div class="c" style="left:468.50px;top:450.65px;transform:scale(0.935,1.08);">2024-01-17</div>
<div class="c" style="left:529.25px;top:450.65px;transform:scale(0.935,1.08);">5405</div>
<div class="c" style="left:602.55px;top:450.65px;transform:scale(0.935,1.08);">-1</div>
<div class="c" style="left:663.30px;top:450.65px;transform:scale(0.935,1.08);">1</div>
<div class="c" style="left:724.05px;top:450.65px;transform:scale(0.935,1.08);">0</div>
<div class="c q" style="left:785.70px;top:450.65px;transform:scale(0.75,1.08);">?</div>
<div class="c q" style="left:846.45px;top:450.65px;transform:scale(0.75,1.08);">?</div>
<div class="a" style="left:2px;top:463.26px;width:10.8px;height:11.76px;background:#3a3a3a"></div>
<div class="c" style="left:14.9px;top:463.61px;transform:scale(0.915,1.08)">Row30</div>
<div class="c" style="left:82.70px;top:463.61px;transform:scale(0.935,1.08);">6</div>
<div class="c" style="left:143.30px;top:463.61px;transform:scale(0.887,1.08);">1AG2750</div>
<div class="c" style="left:225.50px;top:463.61px;transform:scale(0.935,1.08);">447250</div>
<div class="c" style="left:286.25px;top:463.61px;transform:scale(0.935,1.08);">1</div>
<div class="c" style="left:347.00px;top:463.61px;transform:scale(0.935,1.08);">0</div>
<div class="c" style="left:407.75px;top:463.61px;transform:scale(0.935,1.08);">0</div>
<div class="c" style="left:468.50px;top:463.61px;transform:scale(0.935,1.08);">2024-01-18</div>
<div class="c" style="left:529.25px;top:463.61px;transform:scale(0.935,1.08);">1411</div>
<div class="c" style="left:602.55px;top:463.61px;transform:scale(0.935,1.08);">1</div>
<div class="c" style="left:663.30px;top:463.61px;transform:scale(0.935,1.08);">1</div>
<div class="c" style="left:724.05px;top:463.61px;transform:scale(0.935,1.08);">0</div>
<div class="c q" style="left:785.70px;top:463.61px;transform:scale(0.75,1.08);">?</div>
<div class="c q" style="left:846.45px;top:463.61px;transform:scale(0.75,1.08);">?</div>
<div class="a" style="left:2px;top:476.22px;width:10.8px;height:11.76px;background:#3a3a3a"></div>
<div class="c" style="left:14.9px;top:476.57px;transform:scale(0.915,1.08)">Row31</div>
<div class="c" style="left:82.70px;top:476.57px;transform:scale(0.935,1.08);">96</div>
<div class="c" style="left:143.30px;top:476.57px;transform:scale(0.887,1.08);">1AG2750</div>
<div class="c" style="left:225.50px;top:476.57px;transform:scale(0.935,1.08);">447249</div>
<div class="c" style="left:286.25px;top:476.57px;transform:scale(0.935,1.08);">1</div>
<div class="c" style="left:347.00px;top:476.57px;transform:scale(0.935,1.08);">0</div>
<div class="c" style="left:407.75px;top:476.57px;transform:scale(0.935,1.08);">0</div>
<div class="c" style="left:468.50px;top:476.57px;transform:scale(0.935,1.08);">2024-01-18</div>
<div class="c" style="left:529.25px;top:476.57px;transform:scale(0.935,1.08);">5405</div>
<div class="c" style="left:602.55px;top:476.57px;transform:scale(0.935,1.08);">-1</div>
<div class="c" style="left:663.30px;top:476.57px;transform:scale(0.935,1.08);">1</div>
<div class="c" style="left:724.05px;top:476.57px;transform:scale(0.935,1.08);">0</div>
<div class="c q" style="left:785.70px;top:476.57px;transform:scale(0.75,1.08);">?</div>
<div class="c q" style="left:846.45px;top:476.57px;transform:scale(0.75,1.08);">?</div>
<div class="a" style="left:2px;top:489.17px;width:10.8px;height:11.76px;background:#3a3a3a"></div>
<div class="c" style="left:14.9px;top:489.52px;transform:scale(0.915,1.08)">Row32</div>
<div class="c" style="left:82.70px;top:489.52px;transform:scale(0.935,1.08);">5</div>
<div class="c" style="left:143.30px;top:489.52px;transform:scale(0.887,1.08);">1AG2750</div>
<div class="c" style="left:225.50px;top:489.52px;transform:scale(0.935,1.08);">519897</div>
<div class="c" style="left:286.25px;top:489.52px;transform:scale(0.935,1.08);">1</div>
<div class="c" style="left:347.00px;top:489.52px;transform:scale(0.935,1.08);">16.98</div>
<div class="c" style="left:407.75px;top:489.52px;transform:scale(0.935,1.08);">0</div>
<div class="c" style="left:468.50px;top:489.52px;transform:scale(0.935,1.08);">2024-01-23</div>
<div class="c" style="left:529.25px;top:489.52px;transform:scale(0.935,1.08);">1409</div>
<div class="c" style="left:602.55px;top:489.52px;transform:scale(0.935,1.08);">1</div>
<div class="c" style="left:663.30px;top:489.52px;transform:scale(0.935,1.08);">1</div>
<div class="c" style="left:724.05px;top:489.52px;transform:scale(0.935,1.08);">0</div>
<div class="c q" style="left:785.70px;top:489.52px;transform:scale(0.75,1.08);">?</div>
<div class="c q" style="left:846.45px;top:489.52px;transform:scale(0.75,1.08);">?</div>
<div class="a" style="left:2px;top:502.13px;width:10.8px;height:11.76px;background:#3a3a3a"></div>
<div class="c" style="left:14.9px;top:502.48px;transform:scale(0.915,1.08)">Row33</div>
<div class="c" style="left:82.70px;top:502.48px;transform:scale(0.935,1.08);">96</div>
<div class="c" style="left:143.30px;top:502.48px;transform:scale(0.887,1.08);">1AG2750</div>
<div class="c" style="left:225.50px;top:502.48px;transform:scale(0.935,1.08);">447581</div>
<div class="c" style="left:286.25px;top:502.48px;transform:scale(0.935,1.08);">1</div>
<div class="c" style="left:347.00px;top:502.48px;transform:scale(0.935,1.08);">0</div>
<div class="c" style="left:407.75px;top:502.48px;transform:scale(0.935,1.08);">0</div>
<div class="c" style="left:468.50px;top:502.48px;transform:scale(0.935,1.08);">2024-01-24</div>
<div class="c" style="left:529.25px;top:502.48px;transform:scale(0.935,1.08);">5405</div>
<div class="c" style="left:602.55px;top:502.48px;transform:scale(0.935,1.08);">-1</div>
<div class="c" style="left:663.30px;top:502.48px;transform:scale(0.935,1.08);">1</div>
<div class="c" style="left:724.05px;top:502.48px;transform:scale(0.935,1.08);">0</div>
<div class="c q" style="left:785.70px;top:502.48px;transform:scale(0.75,1.08);">?</div>
<div class="c q" style="left:846.45px;top:502.48px;transform:scale(0.75,1.08);">?</div>
<div class="a" style="left:2px;top:515.09px;width:10.8px;height:11.76px;background:#3a3a3a"></div>
<div class="c" style="left:14.9px;top:515.44px;transform:scale(0.915,1.08)">Row34</div>
<div class="c" style="left:82.70px;top:515.44px;transform:scale(0.935,1.08);">5</div>
<div class="c" style="left:143.30px;top:515.44px;transform:scale(0.887,1.08);">1AG2750</div>
<div class="c" style="left:225.50px;top:515.44px;transform:scale(0.935,1.08);">520454</div>
<div class="c" style="left:286.25px;top:515.44px;transform:scale(0.935,1.08);">3</div>
<div class="c" style="left:347.00px;top:515.44px;transform:scale(0.935,1.08);">50.93</div>
<div class="c" style="left:407.75px;top:515.44px;transform:scale(0.935,1.08);">0</div>
<div class="c" style="left:468.50px;top:515.44px;transform:scale(0.935,1.08);">2024-01-27</div>
<div class="c" style="left:529.25px;top:515.44px;transform:scale(0.935,1.08);">1409</div>
<div class="c" style="left:602.55px;top:515.44px;transform:scale(0.935,1.08);">3</div>
<div class="c" style="left:663.30px;top:515.44px;transform:scale(0.935,1.08);">1</div>
<div class="c" style="left:724.05px;top:515.44px;transform:scale(0.935,1.08);">0</div>
<div class="c q" style="left:785.70px;top:515.44px;transform:scale(0.75,1.08);">?</div>
<div class="c q" style="left:846.45px;top:515.44px;transform:scale(0.75,1.08);">?</div>
<div class="a" style="left:2px;top:528.05px;width:10.8px;height:11.76px;background:#3a3a3a"></div>
<div class="c" style="left:14.9px;top:528.40px;transform:scale(0.915,1.08)">Row35</div>
<div class="c q" style="left:83.60px;top:528.40px;transform:scale(0.75,1.08);">?</div>
<div class="c" style="left:143.30px;top:528.40px;transform:scale(0.89,1.08);">1ALIM750</div>
<div class="c q" style="left:226.40px;top:528.40px;transform:scale(0.75,1.08);">?</div>
<div class="c q" style="left:287.15px;top:528.40px;transform:scale(0.75,1.08);">?</div>
<div class="c q" style="left:347.90px;top:528.40px;transform:scale(0.75,1.08);">?</div>
<div class="c q" style="left:408.65px;top:528.40px;transform:scale(0.75,1.08);">?</div>
<div class="c q" style="left:469.40px;top:528.40px;transform:scale(0.75,1.08);">?</div>
<div class="c q" style="left:530.15px;top:528.40px;transform:scale(0.75,1.08);">?</div>
<div class="c q" style="left:603.45px;top:528.40px;transform:scale(0.75,1.08);">?</div>
<div class="c" style="left:663.30px;top:528.40px;transform:scale(0.935,1.08);">0</div>
<div class="c" style="left:724.05px;top:528.40px;transform:scale(0.935,1.08);">11</div>
<div class="c" style="left:784.80px;top:528.40px;transform:scale(0.935,1.08);">35.42</div>
<div class="c" style="left:845.55px;top:528.40px;transform:scale(0.935,1.08);">389.62</div>
<div class="a" style="left:2px;top:541.00px;width:10.8px;height:11.76px;background:#3a3a3a"></div>
<div class="c" style="left:14.9px;top:541.35px;transform:scale(0.915,1.08)">Row36</div>
<div class="c" style="left:82.70px;top:541.35px;transform:scale(0.935,1.08);">96</div>
<div class="c" style="left:143.30px;top:541.35px;transform:scale(0.89,1.08);">1ALIM750</div>
<div class="c" style="left:225.50px;top:541.35px;transform:scale(0.935,1.08);">447339</div>
<div class="c" style="left:286.25px;top:541.35px;transform:scale(0.935,1.08);">1</div>
<div class="c" style="left:347.00px;top:541.35px;transform:scale(0.935,1.08);">0</div>
<div class="c" style="left:407.75px;top:541.35px;transform:scale(0.935,1.08);">0</div>
<div class="c" style="left:468.50px;top:541.35px;transform:scale(0.935,1.08);">2024-01-19</div>
<div class="c" style="left:529.25px;top:541.35px;transform:scale(0.935,1.08);">5405</div>
<div class="c" style="left:602.55px;top:541.35px;transform:scale(0.935,1.08);">-1</div>
<div class="c" style="left:663.30px;top:541.35px;transform:scale(0.935,1.08);">1</div>
<div class="c" style="left:724.05px;top:541.35px;transform:scale(0.935,1.08);">0</div>
<div class="c q" style="left:785.70px;top:541.35px;transform:scale(0.75,1.08);">?</div>
<div class="c q" style="left:846.45px;top:541.35px;transform:scale(0.75,1.08);">?</div>
<div class="a" style="left:2px;top:553.96px;width:10.8px;height:11.76px;background:#3a3a3a"></div>
<div class="c" style="left:14.9px;top:554.31px;transform:scale(0.915,1.08)">Row37</div>
<div class="c" style="left:82.70px;top:554.31px;transform:scale(0.935,1.08);">5</div>
<div class="c" style="left:143.30px;top:554.31px;transform:scale(0.89,1.08);">1ALIM750</div>
<div class="c" style="left:225.50px;top:554.31px;transform:scale(0.935,1.08);">519984</div>
<div class="c" style="left:286.25px;top:554.31px;transform:scale(0.935,1.08);">1</div>
<div class="c" style="left:347.00px;top:554.31px;transform:scale(0.935,1.08);">36.24</div>
<div class="c" style="left:407.75px;top:554.31px;transform:scale(0.935,1.08);">0</div>
<div class="c" style="left:468.50px;top:554.31px;transform:scale(0.935,1.08);">2024-01-23</div>
<div class="c" style="left:529.25px;top:554.31px;transform:scale(0.935,1.08);">1409</div>
<div class="c" style="left:602.55px;top:554.31px;transform:scale(0.935,1.08);">1</div>
<div class="c" style="left:663.30px;top:554.31px;transform:scale(0.935,1.08);">1</div>
<div class="c" style="left:724.05px;top:554.31px;transform:scale(0.935,1.08);">0</div>
<div class="c q" style="left:785.70px;top:554.31px;transform:scale(0.75,1.08);">?</div>
<div class="c q" style="left:846.45px;top:554.31px;transform:scale(0.75,1.08);">?</div>
<svg class="a" style="left:0;top:0" width="1024" height="569"><line x1="1" y1="73.4" x2="905.1" y2="73.4" stroke="#7c7c7c" stroke-width="1.3"/><line x1="1" y1="86.91" x2="905.7" y2="86.91" stroke="#8e8e8e" stroke-width="1.25"/><line x1="1" y1="99.86" x2="905.7" y2="99.86" stroke="#8e8e8e" stroke-width="1.25"/><line x1="1" y1="112.82" x2="905.7" y2="112.82" stroke="#8e8e8e" stroke-width="1.25"/><line x1="1" y1="125.78" x2="905.7" y2="125.78" stroke="#8e8e8e" stroke-width="1.25"/><line x1="1" y1="138.74" x2="905.7" y2="138.74" stroke="#8e8e8e" stroke-width="1.25"/><line x1="1" y1="151.69" x2="905.7" y2="151.69" stroke="#8e8e8e" stroke-width="1.25"/><line x1="1" y1="164.65" x2="905.7" y2="164.65" stroke="#8e8e8e" stroke-width="1.25"/><line x1="1" y1="177.61" x2="905.7" y2="177.61" stroke="#8e8e8e" stroke-width="1.25"/><line x1="1" y1="190.56" x2="905.7" y2="190.56" stroke="#8e8e8e" stroke-width="1.25"/><line x1="1" y1="203.52" x2="905.7" y2="203.52" stroke="#8e8e8e" stroke-width="1.25"/><line x1="1" y1="216.48" x2="905.7" y2="216.48" stroke="#8e8e8e" stroke-width="1.25"/><line x1="1" y1="229.43" x2="905.7" y2="229.43" stroke="#8e8e8e" stroke-width="1.25"/><line x1="1" y1="242.39" x2="905.7" y2="242.39" stroke="#8e8e8e" stroke-width="1.25"/><line x1="1" y1="255.35" x2="905.7" y2="255.35" stroke="#8e8e8e" stroke-width="1.25"/><line x1="1" y1="268.31" x2="905.7" y2="268.31" stroke="#8e8e8e" stroke-width="1.25"/><line x1="1" y1="281.26" x2="905.7" y2="281.26" stroke="#8e8e8e" stroke-width="1.25"/><line x1="1" y1="294.22" x2="905.7" y2="294.22" stroke="#8e8e8e" stroke-width="1.25"/><line x1="1" y1="307.18" x2="905.7" y2="307.18" stroke="#8e8e8e" stroke-width="1.25"/><line x1="1" y1="320.13" x2="905.7" y2="320.13" stroke="#8e8e8e" stroke-width="1.25"/><line x1="1" y1="333.09" x2="905.7" y2="333.09" stroke="#8e8e8e" stroke-width="1.25"/><line x1="1" y1="346.05" x2="905.7" y2="346.05" stroke="#8e8e8e" stroke-width="1.25"/><line x1="1" y1="359.00" x2="905.7" y2="359.00" stroke="#8e8e8e" stroke-width="1.25"/><line x1="1" y1="371.96" x2="905.7" y2="371.96" stroke="#8e8e8e" stroke-width="1.25"/><line x1="1" y1="384.92" x2="905.7" y2="384.92" stroke="#8e8e8e" stroke-width="1.25"/><line x1="1" y1="397.88" x2="905.7" y2="397.88" stroke="#8e8e8e" stroke-width="1.25"/><line x1="1" y1="410.83" x2="905.7" y2="410.83" stroke="#8e8e8e" stroke-width="1.25"/><line x1="1" y1="423.79" x2="905.7" y2="423.79" stroke="#8e8e8e" stroke-width="1.25"/><line x1="1" y1="436.75" x2="905.7" y2="436.75" stroke="#8e8e8e" stroke-width="1.25"/><line x1="1" y1="449.70" x2="905.7" y2="449.70" stroke="#8e8e8e" stroke-width="1.25"/><line x1="1" y1="462.66" x2="905.7" y2="462.66" stroke="#8e8e8e" stroke-width="1.25"/><line x1="1" y1="475.62" x2="905.7" y2="475.62" stroke="#8e8e8e" stroke-width="1.25"/><line x1="1" y1="488.57" x2="905.7" y2="488.57" stroke="#8e8e8e" stroke-width="1.25"/><line x1="1" y1="501.53" x2="905.7" y2="501.53" stroke="#8e8e8e" stroke-width="1.25"/><line x1="1" y1="514.49" x2="905.7" y2="514.49" stroke="#8e8e8e" stroke-width="1.25"/><line x1="1" y1="527.45" x2="905.7" y2="527.45" stroke="#8e8e8e" stroke-width="1.25"/><line x1="1" y1="540.40" x2="905.7" y2="540.40" stroke="#8e8e8e" stroke-width="1.25"/><line x1="1" y1="553.36" x2="905.7" y2="553.36" stroke="#8e8e8e" stroke-width="1.25"/><line x1="1" y1="566.32" x2="905.7" y2="566.32" stroke="#8e8e8e" stroke-width="1.25"/><line x1="81.5" y1="57" x2="81.5" y2="566.92" stroke="#8a8a8a" stroke-width="1.2"/><line x1="141.5" y1="57" x2="141.5" y2="566.92" stroke="#8a8a8a" stroke-width="1.2"/><line x1="224.3" y1="57" x2="224.3" y2="566.92" stroke="#8a8a8a" stroke-width="1.2"/><line x1="285.05" y1="57" x2="285.05" y2="566.92" stroke="#8a8a8a" stroke-width="1.2"/><line x1="345.8" y1="57" x2="345.8" y2="566.92" stroke="#8a8a8a" stroke-width="1.2"/><line x1="406.55" y1="57" x2="406.55" y2="566.92" stroke="#8a8a8a" stroke-width="1.2"/><line x1="467.3" y1="57" x2="467.3" y2="566.92" stroke="#8a8a8a" stroke-width="1.2"/><line x1="528.05" y1="57" x2="528.05" y2="566.92" stroke="#8a8a8a" stroke-width="1.2"/><line x1="601.35" y1="57" x2="601.35" y2="566.92" stroke="#8a8a8a" stroke-width="1.2"/><line x1="662.1" y1="57" x2="662.1" y2="566.92" stroke="#8a8a8a" stroke-width="1.2"/><line x1="722.85" y1="57" x2="722.85" y2="566.92" stroke="#8a8a8a" stroke-width="1.2"/><line x1="783.6" y1="57" x2="783.6" y2="566.92" stroke="#8a8a8a" stroke-width="1.2"/><line x1="844.35" y1="57" x2="844.35" y2="566.92" stroke="#8a8a8a" stroke-width="1.2"/><line x1="905.1" y1="57" x2="905.1" y2="566.92" stroke="#8a8a8a" stroke-width="1.2"/><line x1="0.7" y1="56" x2="0.7" y2="567" stroke="#8a8a8a" stroke-width="1.4"/><rect x="140.50" y="72.60" width="83.10" height="51.10" fill="none" stroke="#0000F0" stroke-width="2.6"/><rect x="140.50" y="125.30" width="79.30" height="128.00" fill="none" stroke="#0000F0" stroke-width="2.6"/><rect x="138.60" y="253.70" width="86.50" height="103.40" fill="none" stroke="#0000F0" stroke-width="2.6"/><rect x="139.30" y="357.30" width="82.80" height="13.90" fill="none" stroke="#0000F0" stroke-width="2.6"/><rect x="142.30" y="372.10" width="82.40" height="22.20" fill="none" stroke="#0000F0" stroke-width="2.6"/><rect x="141.60" y="396.70" width="80.40" height="129.40" fill="none" stroke="#0000F0" stroke-width="2.6"/><line x1="128.3" y1="386.5" x2="124.1" y2="545" stroke="#0000F0" stroke-width="2.3"/><polygon points="120.2,542 127.4,542 123.7,553.6" fill="#0000F0"/></svg>
</body></html>
